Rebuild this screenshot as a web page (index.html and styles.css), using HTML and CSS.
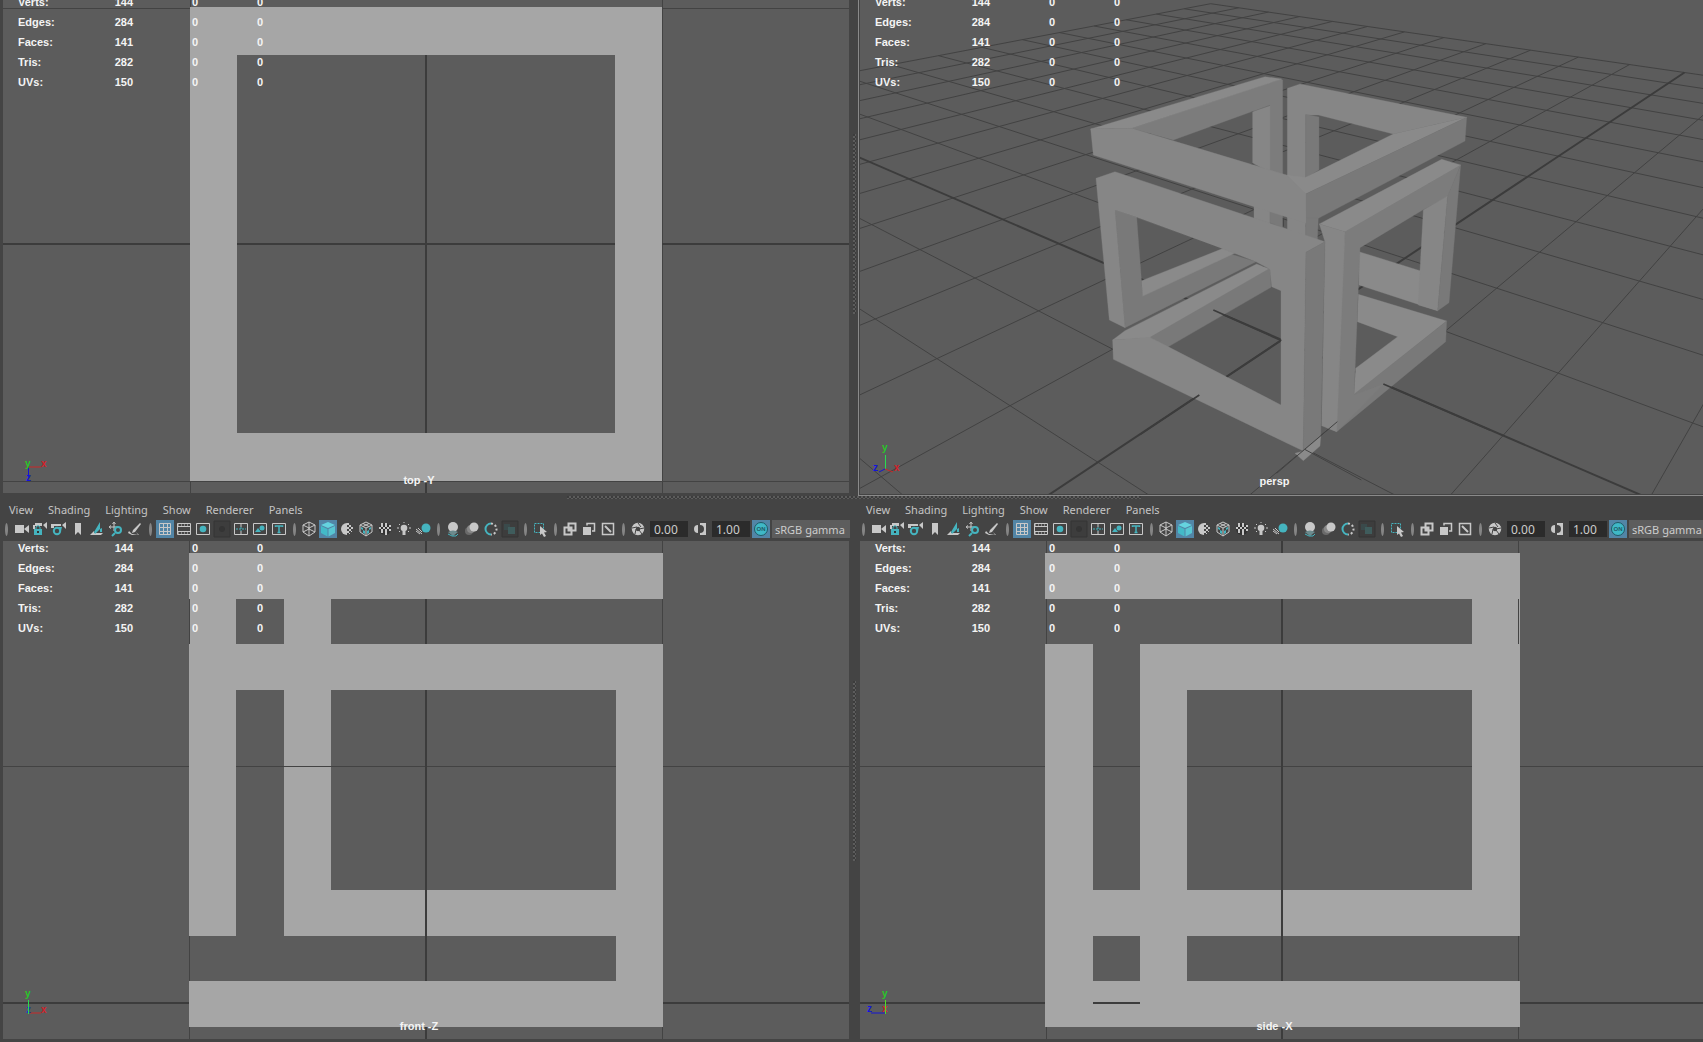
FILE: index.html
```html
<!DOCTYPE html>
<html lang="en">
<head>
<meta charset="utf-8">
<title>Four View Layout</title>
<link rel="stylesheet" href="styles.css">
</head>
<body>
<svg class="sprite" aria-hidden="true">
  <symbol id="i-cam" viewBox="0 0 18 18"><path class="lt" d="M3 5h9v8H3zM12 9l5-4v8z"/></symbol>
  <symbol id="i-lock" viewBox="0 0 18 18"><path class="lt" d="M2 5h2v4H2zM4 3h7v3H4zM12 5l4-3v7z"/><path class="tl" d="M3 9h8v6H3z"/><path class="tls" d="M5 9V7q2-3 4 0v2"/><path d="M6 11h2v2H6z" fill="#333"/></symbol>
  <symbol id="i-camrot" viewBox="0 0 18 18"><path class="lt" d="M1 4h10v2H4v2H1zM12 5l4-3v7z"/><circle class="tls" cx="7" cy="11" r="3.2" stroke-width="2"/><path class="tl" d="M8 7l4 0-1 4z"/></symbol>
  <symbol id="i-mark" viewBox="0 0 18 18"><path class="lt" d="M6 3h6v12l-3-3-3 3z"/></symbol>
  <symbol id="i-plane" viewBox="0 0 18 18"><path class="lt" d="M2 15l4-4v2h9l-2 2z"/><path class="tl" d="M6 12l6-10v7l-5 5zM12 9l2-1v4h-2z"/></symbol>
  <symbol id="i-pan" viewBox="0 0 18 18"><path class="lts" d="M7 3v8M3 7h8M5.500 4L7 2l1.500 2M4 5.500L2 7l2 1.500"/><circle class="tls" cx="11" cy="10" r="3" stroke-width="2"/><path class="tls" d="M8 13l-3 3" stroke-width="2"/></symbol>
  <symbol id="i-pencil" viewBox="0 0 18 18"><path class="lt" d="M14 3l1 1-6 8-3 1 1-3zM3 11l3 3 6 1-2-3 3 3H6l-4-2z"/></symbol>
  <symbol id="i-grid" viewBox="0 0 18 18"><path class="lts" d="M3.500 3.500h11v11h-11zM7.500 4v10M11.500 4v10M4 7.500h10M4 11.500h10"/></symbol>
  <symbol id="i-film" viewBox="0 0 18 18"><path class="lts" d="M2.500 3.500h13v11h-13zM3 6.500h12M3 11.500h12"/><path class="lts" d="M3 5h12M3 13h12" stroke-dasharray="1 2"/></symbol>
  <symbol id="i-gate" viewBox="0 0 18 18"><path class="lts" d="M2.500 3.500h13v11h-13z"/><circle class="tl" cx="9" cy="9" r="3.300"/></symbol>
  <symbol id="i-mask" viewBox="0 0 18 18"><path d="M1 1h16v16H1z" fill="#3d3d3d" stroke="#353535"/><circle cx="9" cy="9" r="3" fill="#343434"/></symbol>
  <symbol id="i-chart" viewBox="0 0 18 18"><path class="lts" d="M2.500 3.500h13v11h-13zM9 4v3M9 11v3"/><path class="tls" d="M4 9h10M9 7v4" stroke-dasharray="2 1"/></symbol>
  <symbol id="i-safe" viewBox="0 0 18 18"><path class="lts" d="M2.500 3.500h13v11h-13z"/><path class="tl" d="M4 12l3-4 3 4z"/><circle class="tl" cx="11" cy="8" r="2.500"/></symbol>
  <symbol id="i-title" viewBox="0 0 18 18"><path class="lts" d="M2.500 3.500h13v11h-13z"/><path class="tls" d="M5.500 7V6h7v1M9 6v6M7.500 12.500h3" stroke-width="1.500"/></symbol>
  <symbol id="i-wire" viewBox="0 0 18 18"><path class="lts" d="M9 2l6 3v7l-6 4-6-4V5zM3 5l6 3 6-3M9 8v8M9 2v7M3 12l6-3 6 3"/></symbol>
  <symbol id="i-cube" viewBox="0 0 18 18"><path fill="#65d3df" d="M9 2l7 3-7 3-7-3z"/><path fill="#43bac8" d="M2 6l6.500 3v7.500L2 13z"/><path fill="#58c6d2" d="M16 6L9.500 9v7.500L16 13z"/></symbol>
  <symbol id="i-half" viewBox="0 0 18 18"><path class="lt" d="M9 3a6 6 0 0 0 0 12z"/><path class="lt" d="M9 3h2v2H9zM11 5h2v2h-2zM9 7h2v2H9zM13 7h2v2h-2zM11 9h2v2h-2zM9 11h2v2H9zM13 11h1v1h-1zM11 13h1v1h-1z"/></symbol>
  <symbol id="i-texcube" viewBox="0 0 18 18"><path class="lts" d="M9 2l6 3v7l-6 4-6-4V5zM3 5l6 3 6-3M9 8v8M6 3.500l6 3M12 3.500l-6 3"/><path class="tl" d="M4 7l2 1v2L4 9zM6 10l2 1v3l-2-1zM14 7l-2 1v2l2-1zM12 10l-2 1v3l2-1z"/></symbol>
  <symbol id="i-check" viewBox="0 0 18 18"><circle cx="9" cy="9" r="6" fill="#333"/><path stroke="#c8c8c8" stroke-width="2" stroke-dasharray="2 2" d="M5 4h8M3 8h12M5 12h8"/><path stroke="#c8c8c8" stroke-width="2" stroke-dasharray="2 2" d="M3 6h12M3 10h12M7 14h6" stroke-dashoffset="2"/></symbol>
  <symbol id="i-bulb" viewBox="0 0 18 18"><circle class="lt" cx="9" cy="8" r="3.300"/><path class="lt" d="M7.500 11h3v4h-3z"/><path class="lts" d="M9 2v1M4 4l1 1M14 4l-1 1M2 8h2M14 8h2M4 12l1-1M14 12l-1-1"/></symbol>
  <symbol id="i-shadow" viewBox="0 0 18 18"><circle class="tl" cx="12" cy="8" r="4.500"/><path class="lts" d="M2 9l6 5M2 11l4 3M4 8l4 4" stroke="#999"/></symbol>
  <symbol id="i-ao" viewBox="0 0 18 18"><circle class="lt" cx="9" cy="7" r="5"/><path d="M4 12q5-3 10 0l-5 4z" fill="#6d8b8e"/><path class="tls" d="M4 14l4 2h4l2-2"/></symbol>
  <symbol id="i-blur" viewBox="0 0 18 18"><circle cx="6" cy="11" r="4" fill="#6a6a6a"/><circle cx="8" cy="9" r="4" fill="#888"/><circle class="lt" cx="11" cy="7" r="4.500"/></symbol>
  <symbol id="i-aa" viewBox="0 0 18 18"><path class="tls" d="M9 3.500a5.500 5.500 0 0 0 0 11" stroke-width="2"/><path class="lts" d="M9 3.500a5.500 5.500 0 0 1 0 11" stroke-width="2" stroke-dasharray="2 2"/></symbol>
  <symbol id="i-dof" viewBox="0 0 18 18"><path d="M1 1h16v16H1z" fill="#3d3d3d" stroke="#353535"/><path d="M3 4h6v6H3z" fill="#3a4a4b"/><path d="M7 7h7v7H7z" fill="#3f5c5c"/></symbol>
  <symbol id="i-iso" viewBox="0 0 18 18"><path class="tls" d="M3.500 3.500h9v9h-9z" stroke-dasharray="2 1"/><path class="lt" d="M9 6l7 6-3 .5 2 3.500-2 1-2-3.500L9 15z"/></symbol>
  <symbol id="i-xray" viewBox="0 0 18 18"><path class="lts" d="M3.500 7.500h7v7h-7zM7.500 3.500h7v7h-7z" stroke-width="2"/><path class="lt" d="M7 7h4v4H7z"/></symbol>
  <symbol id="i-xray2" viewBox="0 0 18 18"><path class="lt" d="M3 7h8v8H3z"/><path class="lts" d="M7 5.500V3.500h7.500v7.500H12" stroke-width="1.500"/></symbol>
  <symbol id="i-joint" viewBox="0 0 18 18"><path class="lts" d="M3.500 3.500h11v11h-11z" stroke-width="1.500"/><path class="lts" d="M6 6l6 6" stroke-width="2"/></symbol>
  <symbol id="i-exp" viewBox="0 0 18 18"><circle class="lts" cx="9" cy="9" r="4.200" stroke-width="4"/><path stroke="#444" d="M9 3l3 4M15 8l-5 1M13 14l-3-4M6 14l1-5M3 8l5-1"/></symbol>
  <symbol id="i-gam" viewBox="0 0 18 18"><path class="lt" d="M7 5a4 4 0 0 0 0 8zM9 3h6v12H9v-2a4 4 0 0 0 0-8z"/></symbol>
</svg>

<main class="views">
  <section class="pane pane-top" aria-label="top">
    <div class="viewport">
      <svg class="scene" viewBox="3 0 846 493" preserveAspectRatio="xMidYMid slice">
        <path class="thin" d="M190.500 0v493M662.500 0v493M3 8.500h846M3 481.500h846"/>
        <path class="mesh" fill-rule="evenodd" d="M190 7h472v474H190zM237 55v378h378V55z"/>
        <path class="axis" d="M426 55v378M426 481v12M3 244h187M237 244h378M662 244h187"/>
        <g class="gizmo"><path stroke="#c82828" d="M28 467h13"/><path stroke="#1414d2" d="M28.500 468v10"/><text x="25" y="467" fill="#28c828">y</text><text x="41" y="467" fill="#d21e28">x</text><text x="26" y="481" fill="#1414dc">z</text></g>
      </svg>
      <table class="hud">
        <tr><th scope="row">Verts:</th><td>144</td><td>0</td><td>0</td></tr>
        <tr><th scope="row">Edges:</th><td>284</td><td>0</td><td>0</td></tr>
        <tr><th scope="row">Faces:</th><td>141</td><td>0</td><td>0</td></tr>
        <tr><th scope="row">Tris:</th><td>282</td><td>0</td><td>0</td></tr>
        <tr><th scope="row">UVs:</th><td>150</td><td>0</td><td>0</td></tr>
      </table>
      <p class="camera">top -Y</p>
    </div>
  </section>
  <div class="split split-v split-upper"></div>
  <section class="pane pane-persp" aria-label="persp">
    <div class="viewport">
      <svg class="scene" viewBox="860 0 843 494" preserveAspectRatio="xMidYMid slice">
        <path class="ground" id="ground"/>
        <path class="ground-axis" id="ground-axis"/>
        <g class="solid" transform="translate(1070 60) scale(.33333)">
          <path class="c" d="M185 205L632 57l6 3v290l-38-15V135L310 240z"/>
          <path class="b" d="M548 155l52-18v200l-52-28zM552 430h48v70l-48-20z"/>
          <path class="d" d="M600 440l38 15v48l-38-15z"/>
          <path class="a" d="M62 207L585 50l50 7L185 205z"/>
          <path class="b" d="M652 85l38-13 500 100-220 50-225-57h-38v385l-55-17z"/>
          <path class="d" d="M707 163l40 8v158l-40 25z"/>
          <path class="d" d="M708 470h37l-3 72-34-12z"/>
          <path class="a" d="M707 352l263-130 220-50-483 230-57-40v-17z"/>
          <path class="d" d="M707 402l483-230-5 71-440 232h-38z"/>
          <path class="b" d="M62 207l123-2 465 140 58 57v88L70 285z"/>
          <path class="d" d="M135 450l65 22 18 236 257-128 83 25-393 198z"/>
          <path class="a" d="M215 662l245-97 40 12-282 132z"/>
          <path class="a" d="M128 840l37-28 395-200 40 16-360 206z"/>
          <path class="d" d="M240 832l360-207 3 57-311 180z"/>
          <path class="a" d="M867 575l183 57 53 120-236-77zM865 703l265 80-278 222 5-80 126-95-121-45z"/>
          <path class="d" d="M1130 783l-3 62-327 270 52-112z"/>
          <path class="c" d="M825 515l347-200-39 95-75 40-188 113-18 442 88-32-140 142-30-12z"/>
          <path class="a" d="M748 492l367-194 57 17-347 200z"/>
          <path class="b" d="M748 492l77 23-20 485-5 115-45-18 10-552z"/>
          <path class="b" d="M1060 450l73-42-30 344-58-17 5-105z"/>
          <path class="d" d="M1172 315l-35 413-34 24 30-344z"/>
          <path class="b" d="M128 840l112-8 393 203v-343l-28-12-5-52-42-23-123-47-235-86-65-22 30 353-47-23-40-425 57-20 630 210-57 32-8 596-570-275z"/>
          <path class="d" d="M708 577l57-32-13 588-52 40z"/>
          <path class="a" d="M675 1180l25-7 52-43-2 28-50 44z"/>
          <path class="over-thick" d="M430 750l202 91-162 109M388 1005L210 1124M940 972l320 138"/>
          <path class="over" d="M802 1085l-98 83-84 72M704 1168l170 92M640 475v25"/>
        </g>
        <g class="gizmo"><path stroke="#28dc50" d="M885.500 455v14"/><path stroke="#1414d2" d="M885 469l-6 3"/><path stroke="#c82828" d="M885 469l8 3"/><text x="882" y="451" fill="#28c828">y</text><text x="873" y="471" fill="#1414dc">z</text><text x="894" y="471" fill="#d21e28">x</text></g>
      </svg>
      <table class="hud">
        <tr><th scope="row">Verts:</th><td>144</td><td>0</td><td>0</td></tr>
        <tr><th scope="row">Edges:</th><td>284</td><td>0</td><td>0</td></tr>
        <tr><th scope="row">Faces:</th><td>141</td><td>0</td><td>0</td></tr>
        <tr><th scope="row">Tris:</th><td>282</td><td>0</td><td>0</td></tr>
        <tr><th scope="row">UVs:</th><td>150</td><td>0</td><td>0</td></tr>
      </table>
      <p class="camera">persp</p>
    </div>
  </section>
  <div class="split split-h"></div>
  <section class="pane pane-front" aria-label="front">
    <nav class="menu"><button>View</button><button>Shading</button><button>Lighting</button><button>Show</button><button>Renderer</button><button>Panels</button></nav>
    <div class="tools">
      <i class="sep"></i>
      <button aria-label="Select camera"><svg><use href="#i-cam"/></svg></button>
      <button aria-label="Lock camera"><svg><use href="#i-lock"/></svg></button>
      <button aria-label="Camera attributes"><svg><use href="#i-camrot"/></svg></button>
      <button aria-label="Bookmarks"><svg><use href="#i-mark"/></svg></button>
      <button aria-label="Image plane"><svg><use href="#i-plane"/></svg></button>
      <button aria-label="2D pan and zoom"><svg><use href="#i-pan"/></svg></button>
      <button aria-label="Grease pencil"><svg><use href="#i-pencil"/></svg></button>
      <i class="sep"></i>
      <button class="on" aria-label="Grid"><svg><use href="#i-grid"/></svg></button>
      <button aria-label="Film gate"><svg><use href="#i-film"/></svg></button>
      <button aria-label="Resolution gate"><svg><use href="#i-gate"/></svg></button>
      <button aria-label="Gate mask" disabled><svg><use href="#i-mask"/></svg></button>
      <button aria-label="Field chart"><svg><use href="#i-chart"/></svg></button>
      <button aria-label="Safe action"><svg><use href="#i-safe"/></svg></button>
      <button aria-label="Safe title"><svg><use href="#i-title"/></svg></button>
      <i class="sep"></i>
      <button aria-label="Wireframe"><svg><use href="#i-wire"/></svg></button>
      <button class="on" aria-label="Smooth shade"><svg><use href="#i-cube"/></svg></button>
      <button aria-label="Default material"><svg><use href="#i-half"/></svg></button>
      <button aria-label="Wireframe on shaded"><svg><use href="#i-texcube"/></svg></button>
      <button aria-label="Textured"><svg><use href="#i-check"/></svg></button>
      <button aria-label="Use all lights"><svg><use href="#i-bulb"/></svg></button>
      <button aria-label="Shadows"><svg><use href="#i-shadow"/></svg></button>
      <i class="sep"></i>
      <button aria-label="Ambient occlusion"><svg><use href="#i-ao"/></svg></button>
      <button aria-label="Motion blur"><svg><use href="#i-blur"/></svg></button>
      <button aria-label="Anti-aliasing"><svg><use href="#i-aa"/></svg></button>
      <button aria-label="Depth of field" disabled><svg><use href="#i-dof"/></svg></button>
      <i class="sep"></i>
      <button aria-label="Isolate select"><svg><use href="#i-iso"/></svg></button>
      <i class="sep"></i>
      <button aria-label="X-ray"><svg><use href="#i-xray"/></svg></button>
      <button aria-label="X-ray active"><svg><use href="#i-xray2"/></svg></button>
      <button aria-label="X-ray joints"><svg><use href="#i-joint"/></svg></button>
      <i class="sep"></i>
      <button aria-label="Reset exposure"><svg><use href="#i-exp"/></svg></button>
      <input type="text" aria-label="Exposure" value="0.00">
      <button aria-label="Reset gamma"><svg><use href="#i-gam"/></svg></button>
      <input type="text" aria-label="Gamma" value="1.00">
      <button class="on cm" aria-label="Color management"><span>ON</span></button>
      <select aria-label="View transform"><option>sRGB gamma</option></select>
    </div>
    <div class="viewport">
      <svg class="scene" viewBox="3 541 846 498" preserveAspectRatio="xMidYMid slice">
        <path class="thin" d="M189.500 541v498M662.500 541v498M3 766.500h846"/>
        <path class="axis" d="M426 541v498M3 1003h846"/>
        <path class="mesh" fill-rule="evenodd" d="M189 553h474v474H189zM236 599v45h48v-45zM331 599v45h332v-45zM236 690v246h-47v45h427v-45H284V690zM331 690v200h285V690z"/>
        <path class="thin" d="M189.500 599v45M284 766.500h47"/>
        <path class="axis" d="M426 890v46"/>
        <path class="thin" d="M662.500 599v45M189.500 936v45"/>
        <g class="gizmo"><path stroke="#c82828" d="M30 1013h11"/><text x="26" y="1013" fill="#1e3cb4">z</text><path stroke="#28dc50" d="M28.500 1000v14"/><text x="25" y="997" fill="#28c828">y</text><text x="41" y="1013" fill="#d21e28">x</text></g>
      </svg>
      <table class="hud">
        <tr><th scope="row">Verts:</th><td>144</td><td>0</td><td>0</td></tr>
        <tr><th scope="row">Edges:</th><td>284</td><td>0</td><td>0</td></tr>
        <tr><th scope="row">Faces:</th><td>141</td><td>0</td><td>0</td></tr>
        <tr><th scope="row">Tris:</th><td>282</td><td>0</td><td>0</td></tr>
        <tr><th scope="row">UVs:</th><td>150</td><td>0</td><td>0</td></tr>
      </table>
      <p class="camera">front -Z</p>
    </div>
  </section>
  <div class="split split-v"></div>
  <section class="pane pane-side" aria-label="side">
    <nav class="menu"><button>View</button><button>Shading</button><button>Lighting</button><button>Show</button><button>Renderer</button><button>Panels</button></nav>
    <div class="tools">
      <i class="sep"></i>
      <button aria-label="Select camera"><svg><use href="#i-cam"/></svg></button>
      <button aria-label="Lock camera"><svg><use href="#i-lock"/></svg></button>
      <button aria-label="Camera attributes"><svg><use href="#i-camrot"/></svg></button>
      <button aria-label="Bookmarks"><svg><use href="#i-mark"/></svg></button>
      <button aria-label="Image plane"><svg><use href="#i-plane"/></svg></button>
      <button aria-label="2D pan and zoom"><svg><use href="#i-pan"/></svg></button>
      <button aria-label="Grease pencil"><svg><use href="#i-pencil"/></svg></button>
      <i class="sep"></i>
      <button class="on" aria-label="Grid"><svg><use href="#i-grid"/></svg></button>
      <button aria-label="Film gate"><svg><use href="#i-film"/></svg></button>
      <button aria-label="Resolution gate"><svg><use href="#i-gate"/></svg></button>
      <button aria-label="Gate mask" disabled><svg><use href="#i-mask"/></svg></button>
      <button aria-label="Field chart"><svg><use href="#i-chart"/></svg></button>
      <button aria-label="Safe action"><svg><use href="#i-safe"/></svg></button>
      <button aria-label="Safe title"><svg><use href="#i-title"/></svg></button>
      <i class="sep"></i>
      <button aria-label="Wireframe"><svg><use href="#i-wire"/></svg></button>
      <button class="on" aria-label="Smooth shade"><svg><use href="#i-cube"/></svg></button>
      <button aria-label="Default material"><svg><use href="#i-half"/></svg></button>
      <button aria-label="Wireframe on shaded"><svg><use href="#i-texcube"/></svg></button>
      <button aria-label="Textured"><svg><use href="#i-check"/></svg></button>
      <button aria-label="Use all lights"><svg><use href="#i-bulb"/></svg></button>
      <button aria-label="Shadows"><svg><use href="#i-shadow"/></svg></button>
      <i class="sep"></i>
      <button aria-label="Ambient occlusion"><svg><use href="#i-ao"/></svg></button>
      <button aria-label="Motion blur"><svg><use href="#i-blur"/></svg></button>
      <button aria-label="Anti-aliasing"><svg><use href="#i-aa"/></svg></button>
      <button aria-label="Depth of field" disabled><svg><use href="#i-dof"/></svg></button>
      <i class="sep"></i>
      <button aria-label="Isolate select"><svg><use href="#i-iso"/></svg></button>
      <i class="sep"></i>
      <button aria-label="X-ray"><svg><use href="#i-xray"/></svg></button>
      <button aria-label="X-ray active"><svg><use href="#i-xray2"/></svg></button>
      <button aria-label="X-ray joints"><svg><use href="#i-joint"/></svg></button>
      <i class="sep"></i>
      <button aria-label="Reset exposure"><svg><use href="#i-exp"/></svg></button>
      <input type="text" aria-label="Exposure" value="0.00">
      <button aria-label="Reset gamma"><svg><use href="#i-gam"/></svg></button>
      <input type="text" aria-label="Gamma" value="1.00">
      <button class="on cm" aria-label="Color management"><span>ON</span></button>
      <select aria-label="View transform"><option>sRGB gamma</option></select>
    </div>
    <div class="viewport">
      <svg class="scene" viewBox="860 541 843 498" preserveAspectRatio="xMidYMid slice">
        <path class="thin" d="M1046.500 541v498M1518.500 541v498M860 766.500h843"/>
        <path class="axis" d="M1282 541v498M860 1003h843"/>
        <path class="mesh" fill-rule="evenodd" d="M1045 553h475v474h-475zM1045 599v45h48v246h47V644h332v-45zM1187 690v200h285V690zM1093 936v45h47v-45zM1187 936v45h333v-45z"/>
        <path class="axis" d="M1282 890v46M1093 1003h47"/>
        <path class="thin" d="M1518.500 599v45M1046.500 599v45M1518.500 936v45"/>
        <g class="gizmo"><path stroke="#1414d2" d="M871 1013h14"/><text x="882" y="1012" fill="#d21e28">x</text><path stroke="#50dc28" d="M885.500 1000v14"/><text x="882" y="997" fill="#28c828">y</text><text x="867" y="1012" fill="#1414dc">z</text></g>
      </svg>
      <table class="hud">
        <tr><th scope="row">Verts:</th><td>144</td><td>0</td><td>0</td></tr>
        <tr><th scope="row">Edges:</th><td>284</td><td>0</td><td>0</td></tr>
        <tr><th scope="row">Faces:</th><td>141</td><td>0</td><td>0</td></tr>
        <tr><th scope="row">Tris:</th><td>282</td><td>0</td><td>0</td></tr>
        <tr><th scope="row">UVs:</th><td>150</td><td>0</td><td>0</td></tr>
      </table>
      <p class="camera">side -X</p>
    </div>
  </section>
</main>
<script src="grid.js"></script>
</body>
</html>
```
FILE: styles.css
```css
* { box-sizing: border-box; }

body {
  margin: 0;
  background: #444;
  color: #ccc;
  font: 11px/16px "Noto Sans", "Open Sans", sans-serif;
  overflow: hidden;
}

.sprite { position: absolute; width: 0; height: 0; }
.lt { fill: #c8c8c8; }
.tl { fill: #45b4bf; }
.lts { fill: none; stroke: #c8c8c8; }
.tls { fill: none; stroke: #45b4bf; }

.views {
  display: grid;
  grid-template-columns: 849fr 9px 845fr;
  grid-template-rows: 496fr 4px 542fr;
  height: 100vh;
}

.pane {
  display: flex;
  flex-direction: column;
  min-width: 0;
  min-height: 0;
}
.pane-top { padding: 0 0 3px 3px; }
.pane-persp {
  padding: 0 0 1px 1px;
  border: solid #8a8a8a;
  border-width: 0 0 1px 1px;
}
.pane-front { padding: 0 0 3px 3px; }
.pane-side { padding: 0 0 3px 2px; }

.split-v {
  place-self: center;
  width: 3px;
  height: 180px;
  margin-left: 2px;
  background: repeating-conic-gradient(#5c5c5c 0 25%, #3c3c3c 0 50%) 0 0 / 4px 4px;
}
.split-upper { margin-bottom: 48px; }
.split-h {
  grid-column: 1 / -1;
  place-self: start center;
  width: 574px;
  height: 3px;
  margin-left: 4px;
  background: repeating-conic-gradient(#5c5c5c 0 25%, #3c3c3c 0 50%) 0 0 / 4px 4px;
}

.menu {
  display: flex;
  flex: none;
  gap: 15px;
  height: 19px;
  padding: 1px 0 0 6px;
  align-items: center;
}
.menu button {
  padding: 0;
  border: 0;
  background: none;
  color: #c4c4c4;
  font: inherit;
}

.tools {
  display: flex;
  flex: none;
  align-items: center;
  height: 22px;
  margin-left: -2px;
  padding-bottom: 2px;
}
.tools button {
  flex: none;
  width: 18px;
  height: 18px;
  margin-right: 1px;
  padding: 0;
  border: 0;
  background: none;
}
.tools button.on { background: #5285a6; }
.tools svg { display: block; width: 18px; height: 18px; }
.tools .cm { margin: 0 2px; }
.cm span {
  display: block;
  width: 14px;
  height: 14px;
  margin: 2px;
  border: 1px solid #1f5a66;
  border-radius: 50%;
  background: #3fb8c6;
  color: #1f5a66;
  font: bold 6px/12px "Liberation Sans", sans-serif;
  text-align: center;
}
.sep {
  flex: none;
  width: 3px;
  height: 13px;
  margin: 0 4px;
  border-radius: 50%;
  background: #858585;
}
.tools input {
  flex: none;
  width: 38px;
  height: 16px;
  margin: 0 3px 0 2px;
  padding: 0 0 0 4px;
  border: 0;
  background: #2b2b2b;
  color: #ccc;
  font-family: inherit;
  font-size: 12px;
}
.tools input:last-of-type { margin-right: 0; }
.tools select {
  flex: none;
  width: 78px;
  height: 18px;
  padding: 1px 3px 0;
  border: 0;
  border-radius: 0;
  appearance: none;
  background: #5d5d5d;
  color: #ccc;
  font: inherit;
}

.viewport {
  position: relative;
  flex: 1;
  min-height: 0;
  overflow: hidden;
  background: #5c5c5c;
}
.scene { display: block; width: 100%; height: 100%; }
.thin { fill: none; stroke: #434343; }
.axis { fill: none; stroke: #3c3c3c; stroke-width: 2; }
.mesh { fill: #a6a6a6; }

.ground { fill: none; stroke: #424242; }
.ground-axis { fill: none; stroke: #3c3c3c; stroke-width: 2; }
.solid path { stroke-linejoin: round; }
.a { fill: #8a8a8a; stroke: #8a8a8a; }
.b { fill: #868686; stroke: #868686; }
.c { fill: #7c7c7c; stroke: #7c7c7c; }
.d { fill: #797979; stroke: #797979; }
.over { fill: none; stroke: #424242; stroke-width: 3; }
.over-thick { fill: none; stroke: #3c3c3c; stroke-width: 5; }

.gizmo { fill: none; stroke-width: 1; }
.gizmo text { font: bold 10px "Liberation Sans", sans-serif; }

.hud {
  position: absolute;
  top: -3px;
  left: 15px;
  border-collapse: collapse;
  color: #f4f4f4;
  font: bold 11px/20px "Liberation Sans", Arial, sans-serif;
}
.pane-top .hud, .pane-persp .hud { top: -8px; }
.hud th { width: 50px; padding: 0; text-align: left; }
.hud td { width: 65px; padding: 0; text-align: right; }

.camera {
  position: absolute;
  right: 14px;
  bottom: 5px;
  left: 0;
  margin: 0;
  color: #f4f4f4;
  font: bold 11px/16px "Liberation Sans", Arial, sans-serif;
  text-align: center;
}
```
FILE: grid.js
```js
// Ground plane: 12 units each way, one line per unit, seen through the persp camera.
const EXTENT = 12;
const origin = { x: 1282, y: 340 };
const vanishX = { x: 145, y: -151, k: -0.0814 };
const vanishZ = { x: 2021, y: -151, k: -0.0997 };
const NEAR = 0.15;

const depth = (x, z) => 1 + vanishX.k * x + vanishZ.k * z;

function project(x, z) {
  const w = depth(x, z);
  const px = (origin.x + vanishX.x * vanishX.k * x + vanishZ.x * vanishZ.k * z) / w;
  const py = (origin.y + vanishX.y * vanishX.k * x + vanishZ.y * vanishZ.k * z) / w;
  return px.toFixed(1) + " " + py.toFixed(1);
}

function alongZ(x) {
  const end = Math.min(EXTENT, (NEAR - 1 - vanishX.k * x) / vanishZ.k);
  return end > -EXTENT ? "M" + project(x, -EXTENT) + "L" + project(x, end) : "";
}

function alongX(z) {
  const end = Math.min(EXTENT, (NEAR - 1 - vanishZ.k * z) / vanishX.k);
  return end > -EXTENT ? "M" + project(-EXTENT, z) + "L" + project(end, z) : "";
}

let lines = "";
for (let i = -EXTENT; i <= EXTENT; i++) {
  if (i !== 0) lines += alongZ(i) + alongX(i);
}
document.getElementById("ground").setAttribute("d", lines);
document.getElementById("ground-axis").setAttribute("d", alongZ(0) + alongX(0));
```
